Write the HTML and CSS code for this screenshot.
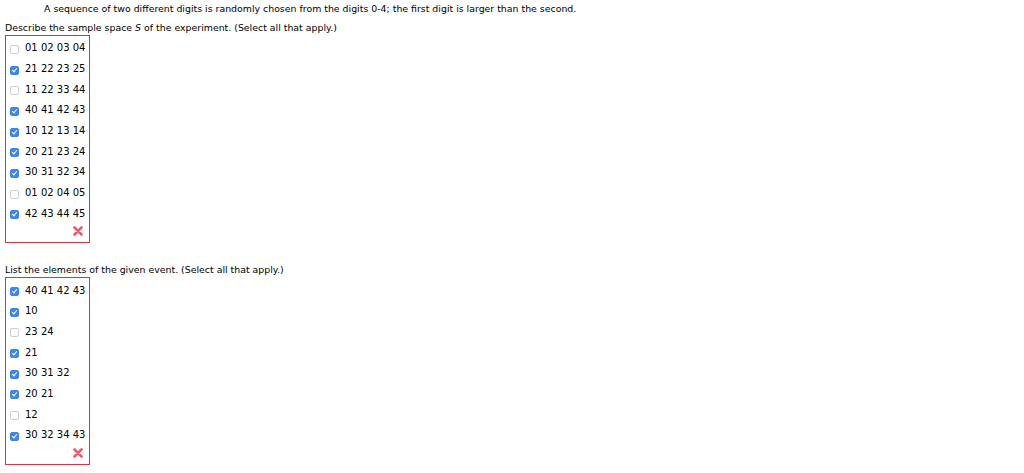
FILE: index.html
```html
<!DOCTYPE html>
<html>
<head>
<meta charset="utf-8">
<link rel="stylesheet" href="styles.css">
</head>
<body>
<div class="page">
  <p class="intro">A sequence of two different digits is randomly chosen from the digits 0-4; the first digit is larger than the second.</p>
  <p class="prompt">Describe the sample space <i>S</i> of the experiment. (Select all that apply.)</p>
  <div class="answer">
    <div class="opt"><span class="cb"></span>01 02 03 04</div>
    <div class="opt"><span class="cb on"></span>21 22 23 25</div>
    <div class="opt"><span class="cb"></span>11 22 33 44</div>
    <div class="opt"><span class="cb on"></span>40 41 42 43</div>
    <div class="opt"><span class="cb on"></span>10 12 13 14</div>
    <div class="opt"><span class="cb on"></span>20 21 23 24</div>
    <div class="opt"><span class="cb on"></span>30 31 32 34</div>
    <div class="opt"><span class="cb"></span>01 02 04 05</div>
    <div class="opt"><span class="cb on"></span>42 43 44 45</div>
    <div class="mark"><svg width="10" height="10" viewBox="0 0 10 10"><path d="M1.5 1.5 L8.5 8.5 M8.5 1.5 L1.5 8.5" stroke="#ef5a6a" stroke-width="2.6" stroke-linecap="round"/></svg></div>
  </div>
  <p class="prompt second">List the elements of the given event. (Select all that apply.)</p>
  <div class="answer">
    <div class="opt"><span class="cb on"></span>40 41 42 43</div>
    <div class="opt"><span class="cb on"></span>10</div>
    <div class="opt"><span class="cb"></span>23 24</div>
    <div class="opt"><span class="cb on"></span>21</div>
    <div class="opt"><span class="cb on"></span>30 31 32</div>
    <div class="opt"><span class="cb on"></span>20 21</div>
    <div class="opt"><span class="cb"></span>12</div>
    <div class="opt"><span class="cb on"></span>30 32 34 43</div>
    <div class="mark"><svg width="10" height="10" viewBox="0 0 10 10"><path d="M1.5 1.5 L8.5 8.5 M8.5 1.5 L1.5 8.5" stroke="#ef5a6a" stroke-width="2.6" stroke-linecap="round"/></svg></div>
  </div>
</div>
</body>
</html>
```
FILE: styles.css
```css
html, body { margin: 0; padding: 0; background: #fff; }
body { font-family: "DejaVu Sans", Verdana, sans-serif; font-size: 9.4px; color: #000; }
.page { padding: 2px 5px 0 5px; }
p { margin: 0; }
.intro { padding-left: 39px; height: 14px; line-height: 14px; }
.prompt { margin-top: 5px; height: 14px; line-height: 14px; }
.prompt.second { margin-top: 20px; }
.answer {
  width: 83px;
  border: 1px solid #e0303e;
  margin-top: 0;
  padding: 2px 0 4px 0;
}
.opt { display: flex; align-items: center; height: 20.7px; line-height: 14px; font-size: 10px; }
.cb {
  width: 9px; height: 9px; box-sizing: border-box;
  border: 1px solid #cfcfcf; border-radius: 2px;
  margin: 2px 6px 0 4px; background: #fff; flex: none;
  position: relative;
}
.cb.on { background: #3d86f0; border-color: #3d86f0; }
.cb.on::after {
  content: ""; position: absolute; left: 2px; top: 0px;
  width: 2px; height: 4px; border: solid #fff; border-width: 0 1px 1px 0;
  transform: rotate(40deg);
}
.mark { display: flex; justify-content: flex-end; padding-right: 6px; height: 14px; align-items: center; }
.mark svg { display: block; }
```
